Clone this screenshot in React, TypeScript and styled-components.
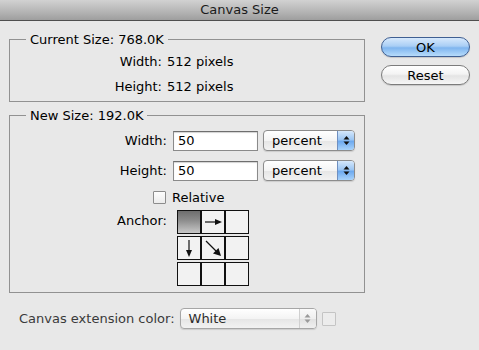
import React, { useState } from "react";
import styled, { createGlobalStyle } from "styled-components";

const GlobalStyle = createGlobalStyle`
  html, body {
    margin: 0;
    padding: 0;
    background: #e8e8e8;
  }
  body {
    font-family: "DejaVu Sans", "Liberation Sans", sans-serif;
    font-size: 13px;
    color: #000;
  }
`;

const Window = styled.div`
  width: 479px;
  height: 350px;
  background: #e8e8e8;
  overflow: hidden;
`;

const TitleBar = styled.div`
  height: 20px;
  line-height: 20px;
  text-align: center;
  color: #1a1a1a;
  background: linear-gradient(#d2d2d2, #b4b4b4 60%, #9e9e9e);
  border-bottom: 1px solid #4f4f4f;
`;

const Body = styled.div`
  display: flex;
  padding: 10px 0 0 9px;
`;

const Main = styled.div`
  width: 356px;
  display: flex;
  flex-direction: column;
`;

const Side = styled.div`
  margin-left: 16px;
  padding-top: 6px;
  display: flex;
  flex-direction: column;
  gap: 8px;
`;

const Group = styled.fieldset<{ $top?: number }>`
  margin: ${(p) => p.$top || 0}px 0 0;
  padding: 0 0 5px;
  border: 1px solid #919191;
  min-width: 0;
`;

const Legend = styled.legend`
  margin-left: 16px;
  padding: 0 4px;
  line-height: 17px;
`;

const InfoRows = styled.div`
  display: flex;
  flex-direction: column;
  gap: 7px;
  padding-top: 5px;
`;

const Row = styled.div<{ $label: number; $gap: number }>`
  display: grid;
  grid-template-columns: ${(p) => p.$label}px auto;
  column-gap: ${(p) => p.$gap}px;
  align-items: center;
  line-height: 18px;
`;

const Label = styled.span`
  text-align: right;
`;

const Controls = styled.div`
  display: flex;
  align-items: center;
  gap: 5px;
`;

const FormRows = styled.div`
  display: flex;
  flex-direction: column;
  padding-top: 6px;
  gap: 9px;
`;

const TextInput = styled.input`
  box-sizing: border-box;
  width: 85px;
  height: 20px;
  padding: 0 4px;
  border: 1px solid #8a8a8a;
  border-top-color: #6e6e6e;
  box-shadow: inset 0 1px 1px rgba(0, 0, 0, 0.18);
  background: #fff;
  font: inherit;
  color: #000;
  outline: none;
`;

const Popup = styled.div<{ $width: number; $disabled?: boolean }>`
  box-sizing: border-box;
  width: ${(p) => p.$width}px;
  height: 21px;
  display: flex;
  align-items: stretch;
  border: 1px solid ${(p) => (p.$disabled ? "#a6a6a6" : "#8c8c8c")};
  border-radius: 4px;
  background: linear-gradient(#ffffff, #f4f4f4 50%, #e6e6e6 55%, #f2f2f2);
  box-shadow: 0 1px 1px rgba(0, 0, 0, 0.12);
  overflow: hidden;
`;

const PopupText = styled.span<{ $disabled?: boolean }>`
  flex: 1;
  padding-left: 8px;
  line-height: 19px;
  color: ${(p) => (p.$disabled ? "#2b2b2b" : "#000")};
`;

const PopupArrows = styled.span<{ $disabled?: boolean }>`
  width: 16px;
  display: flex;
  align-items: center;
  justify-content: center;
  border-left: 1px solid ${(p) => (p.$disabled ? "#d0d0d0" : "#6f8fc0")};
  background: ${(p) =>
    p.$disabled
      ? "linear-gradient(#fafafa, #efefef 50%, #e2e2e2 55%, #f0f0f0)"
      : "linear-gradient(#d6e8fb, #9cc6f3 45%, #6eaaef 55%, #a9d3fb)"};
`;

const CheckRow = styled.label`
  display: flex;
  align-items: center;
  gap: 6px;
  margin: 8px 0 0 143px;
  line-height: 17px;
`;

const Box = styled.span<{ $disabled?: boolean }>`
  box-sizing: border-box;
  width: 13px;
  height: 13px;
  border: 1px solid ${(p) => (p.$disabled ? "#c4c4c4" : "#8c8c8c")};
  background: ${(p) =>
    p.$disabled ? "#ececec" : "linear-gradient(#fdfdfd, #ececec)"};
  border-radius: 1px;
`;

const AnchorRow = styled.div`
  display: grid;
  grid-template-columns: 157px auto;
  column-gap: 10px;
  align-items: start;
  margin-top: 4px;
  margin-bottom: 1px;
`;

const AnchorLabel = styled.span`
  text-align: right;
  line-height: 20px;
  margin-top: 1px;
`;

const AnchorGrid = styled.div`
  display: grid;
  grid-template-columns: repeat(3, 24px);
  grid-auto-rows: 24px;
  row-gap: 2px;
`;

const Cell = styled.div<{ $active?: boolean }>`
  box-sizing: border-box;
  border: 1px solid #111;
  display: flex;
  align-items: center;
  justify-content: center;
  background: ${(p) =>
    p.$active ? "linear-gradient(#6e6e6e, #8a8a8a 40%, #c8c8c8)" : "#f2f2f2"};
`;

const ExtRow = styled.div`
  display: flex;
  align-items: center;
  margin-top: 15px;
  padding-left: 10px;
  color: #3a3a3a;
`;

const ExtLabel = styled.span`
  margin-right: 5px;
`;

const ExtBox = styled(Box)`
  width: 14px;
  height: 14px;
  margin-left: 5px;
`;

const Button = styled.button<{ $primary?: boolean }>`
  width: 89px;
  height: 20px;
  padding: 0;
  border-radius: 10px;
  font: inherit;
  color: #000;
  border: 1px solid ${(p) => (p.$primary ? "#3f5f92" : "#7c7c7c")};
  background: ${(p) =>
    p.$primary
      ? "linear-gradient(#d7e9fc, #a9cef5 45%, #7fb5ef 55%, #b7dcfb)"
      : "linear-gradient(#ffffff, #f3f3f3 45%, #e4e4e4 55%, #f6f6f6)"};
  box-shadow: 0 1px 1px rgba(0, 0, 0, 0.15);
`;

const Arrows = ({ dim }: { dim?: boolean }) => (
  <svg width="7" height="11" viewBox="0 0 7 11">
    <path d="M3.5 1 L6.5 4.5 H0.5 Z" fill={dim ? "#9a9a9a" : "#111"} />
    <path d="M3.5 10 L6.5 6.5 H0.5 Z" fill={dim ? "#9a9a9a" : "#111"} />
  </svg>
);

const Arrow = ({ dir }: { dir: "right" | "down" | "diag" }) => {
  if (dir === "right")
    return (
      <svg width="22" height="22" viewBox="0 0 22 22">
        <line x1="3" y1="11" x2="14" y2="11" stroke="#111" strokeWidth="1.2" />
        <path d="M20 11 L13 8 L13 14 Z" fill="#111" />
      </svg>
    );
  if (dir === "down")
    return (
      <svg width="22" height="22" viewBox="0 0 22 22">
        <line x1="11" y1="3" x2="11" y2="14" stroke="#111" strokeWidth="1.2" />
        <path d="M11 20 L8 13 L14 13 Z" fill="#111" />
      </svg>
    );
  return (
    <svg width="22" height="22" viewBox="0 0 22 22">
      <line x1="4" y1="4" x2="14" y2="14" stroke="#111" strokeWidth="1.2" />
      <path d="M19 19 L11 16.5 L16.5 11 Z" fill="#111" />
    </svg>
  );
};

const Popdown = ({
  value,
  width,
  disabled,
}: {
  value: string;
  width: number;
  disabled?: boolean;
}) => (
  <Popup $width={width} $disabled={disabled}>
    <PopupText $disabled={disabled}>{value}</PopupText>
    <PopupArrows $disabled={disabled}>
      <Arrows dim={disabled} />
    </PopupArrows>
  </Popup>
);

const App = () => {
  const [size, setSize] = useState({ width: "50", height: "50" });

  const cells: (null | "right" | "down" | "diag" | "active")[] = [
    "active", "right", null,
    "down", "diag", null,
    null, null, null,
  ];

  return (
    <Window>
      <GlobalStyle />
      <TitleBar>Canvas Size</TitleBar>
      <Body>
        <Main>
          <Group>
            <Legend>Current Size: 768.0K</Legend>
            <InfoRows>
              <Row $label={152} $gap={5}>
                <Label>Width:</Label>
                <span>512 pixels</span>
              </Row>
              <Row $label={152} $gap={5}>
                <Label>Height:</Label>
                <span>512 pixels</span>
              </Row>
            </InfoRows>
          </Group>

          <Group $top={5}>
            <Legend>New Size: 192.0K</Legend>
            <FormRows>
              <Row $label={157} $gap={6}>
                <Label>Width:</Label>
                <Controls>
                  <TextInput
                    value={size.width}
                    onChange={(e) =>
                      setSize({ width: e.target.value, height: size.height })
                    }
                  />
                  <Popdown value="percent" width={92} />
                </Controls>
              </Row>
              <Row $label={157} $gap={6}>
                <Label>Height:</Label>
                <Controls>
                  <TextInput
                    value={size.height}
                    onChange={(e) =>
                      setSize({ width: size.width, height: e.target.value })
                    }
                  />
                  <Popdown value="percent" width={92} />
                </Controls>
              </Row>
            </FormRows>
            <CheckRow>
              <Box />
              <span>Relative</span>
            </CheckRow>
            <AnchorRow>
              <AnchorLabel>Anchor:</AnchorLabel>
              <AnchorGrid>
                {cells.map((c, i) => (
                  <Cell key={i} $active={c === "active"}>
                    {c && c !== "active" && <Arrow dir={c} />}
                  </Cell>
                ))}
              </AnchorGrid>
            </AnchorRow>
          </Group>

          <ExtRow>
            <ExtLabel>Canvas extension color:</ExtLabel>
            <Popdown value="White" width={137} disabled />
            <ExtBox $disabled />
          </ExtRow>
        </Main>

        <Side>
          <Button $primary>OK</Button>
          <Button>Reset</Button>
        </Side>
      </Body>
    </Window>
  );
};

export default App;
